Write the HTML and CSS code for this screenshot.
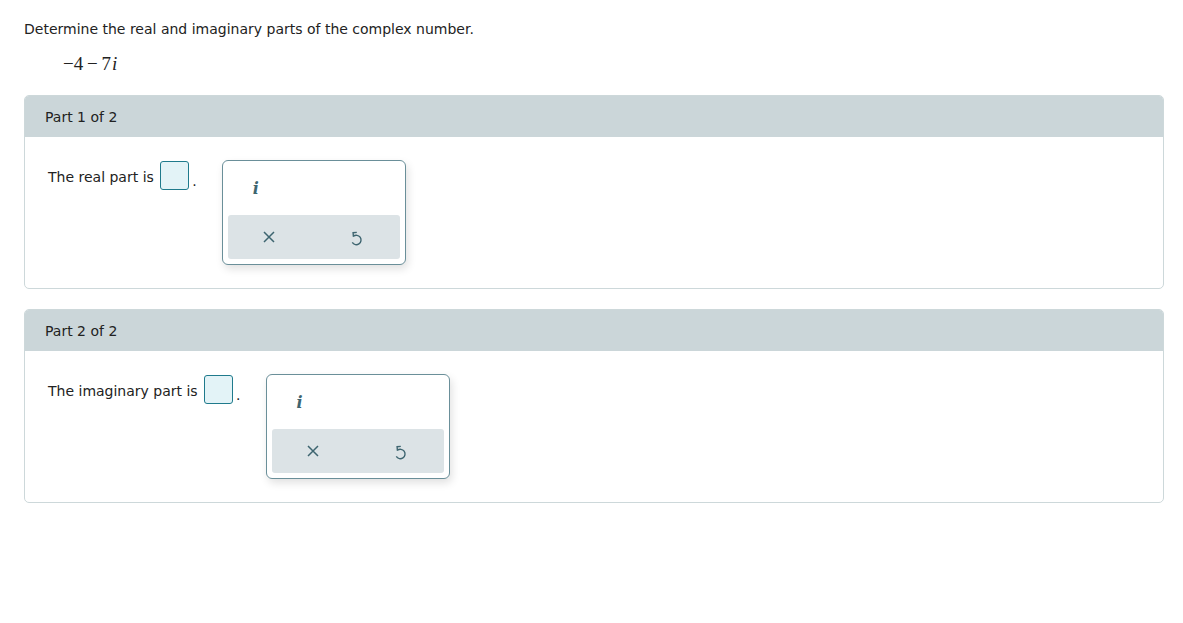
FILE: index.html
```html
<!DOCTYPE html>
<html>
<head>
<meta charset="utf-8">
<link rel="stylesheet" href="styles.css">
</head>
<body>
<div class="page">
  <p class="question">Determine the real and imaginary parts of the complex number.</p>
  <div class="math">&minus;4&thinsp;&minus;&thinsp;7<i>i</i></div>

  <section class="part">
    <div class="part-head">Part 1 of 2</div>
    <div class="part-body">
      <div class="answer"><span class="label">The real part is </span><span class="box"></span><span class="dot">.</span></div>
      <div class="keypad">
        <div class="keys"><span class="ikey">i</span></div>
        <div class="tools">
          <svg class="x" width="12" height="12" viewBox="0 0 12 12"><path d="M1 1L11 11M11 1L1 11" stroke="#3e6570" stroke-width="1.5" fill="none"/></svg>
          <svg class="undo" width="13" height="16" viewBox="0 0 13 16"><path d="M2.3 12.4A4.7 4.7 0 1 0 3.4 6.3" stroke="#3e6570" stroke-width="1.4" fill="none"/><path d="M6.8 2.4L3.1 2.7L3.4 6.8" stroke="#3e6570" stroke-width="1.4" fill="none"/></svg>
        </div>
      </div>
    </div>
  </section>

  <section class="part">
    <div class="part-head">Part 2 of 2</div>
    <div class="part-body">
      <div class="answer"><span class="label">The imaginary part is </span><span class="box"></span><span class="dot">.</span></div>
      <div class="keypad">
        <div class="keys"><span class="ikey">i</span></div>
        <div class="tools">
          <svg class="x" width="12" height="12" viewBox="0 0 12 12"><path d="M1 1L11 11M11 1L1 11" stroke="#3e6570" stroke-width="1.5" fill="none"/></svg>
          <svg class="undo" width="13" height="16" viewBox="0 0 13 16"><path d="M2.3 12.4A4.7 4.7 0 1 0 3.4 6.3" stroke="#3e6570" stroke-width="1.4" fill="none"/><path d="M6.8 2.4L3.1 2.7L3.4 6.8" stroke="#3e6570" stroke-width="1.4" fill="none"/></svg>
        </div>
      </div>
    </div>
  </section>
</div>
</body>
</html>
```

FILE: styles.css
```css
html, body {
  margin: 0;
  padding: 0;
  background: #fff;
}
body {
  font-family: "DejaVu Sans", Verdana, sans-serif;
  font-size: 14px;
  color: #222;
}
.page {
  padding: 19px 19px 0 24px;
}
.question {
  margin: 0;
  line-height: 20px;
}
.math {
  font-family: "Liberation Serif", "Times New Roman", serif;
  font-size: 19px;
  color: #222;
  margin: 13px 0 0 39px;
  line-height: 24px;
}
.math i {
  font-style: italic;
  margin-left: 1px;
}
.part {
  border: 1px solid #cdd8da;
  border-radius: 5px;
  margin-top: 20px;
  overflow: hidden;
}
.math + .part {
  margin-top: 19px;
}
.part-head {
  background: #cbd6d9;
  height: 41px;
  line-height: 42px;
  padding-left: 20px;
}
.part-body {
  display: flex;
  align-items: flex-start;
  padding: 23px 0 23px 23px;
}
.answer {
  display: flex;
  align-items: center;
  white-space: pre;
  margin-top: 1px;
}
.label {
  padding-top: 3px;
}
.box {
  display: inline-block;
  width: 27px;
  height: 27px;
  border: 1.5px solid #1f7a8c;
  border-radius: 3px;
  background: #e3f3f7;
  margin-left: 2px;
}
.dot {
  margin-left: 3px;
  margin-top: 10px;
}
.keypad {
  margin-left: 25px;
  border: 1px solid #6a8f99;
  border-radius: 6px;
  background: #fff;
  box-shadow: 2px 4px 8px rgba(0, 0, 0, 0.12);
  display: flex;
  flex-direction: column;
  padding: 0 5px 5px 5px;
  box-sizing: border-box;
  height: 105px;
  width: 184px;
}
.keys {
  height: 54px;
  display: flex;
  align-items: center;
  padding-left: 25px;
}
.ikey {
  font-family: "DejaVu Serif", serif;
  font-style: italic;
  font-weight: bold;
  color: #3e6570;
  font-size: 16px;
}
.tools {
  flex: 1;
  background: #dce3e6;
  border-radius: 3px;
  display: flex;
  align-items: center;
  justify-content: space-between;
  padding: 0 37px 0 35px;
}
.tools .undo {
  margin-top: 1px;
}
```
